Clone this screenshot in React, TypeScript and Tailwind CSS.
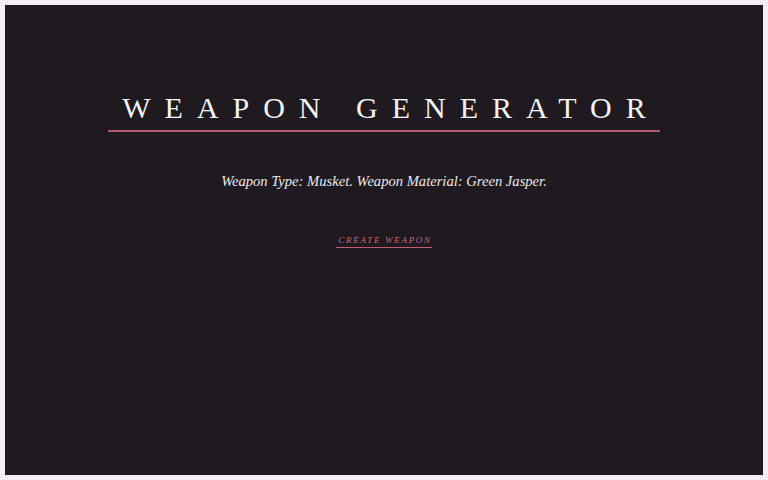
const serif = { fontFamily: '"Liberation Serif", "DejaVu Serif", serif' };

function WeaponCard({ type, material }: { type: string; material: string }) {
  return (
    <p className="mt-[39px] text-center text-[14.6px] italic text-[#ece8ec]">
      Weapon Type: {type}. Weapon Material: {material}.
    </p>
  );
}

export default function App() {
  return (
    <div className="h-screen w-full bg-[#f1eff2] p-[5px]" style={serif}>
      <main className="flex h-full w-full flex-col items-center bg-[#1e1a1f] pt-[83px]">
        <header className="flex flex-col items-center">
          <h1 className="px-[15px] pl-[29px] text-[30px] font-normal leading-[40px] tracking-[14px] text-[#f4f2f4]">
            WEAPON GENERATOR
          </h1>
          <div className="mt-[2px] h-[2px] w-[552px] bg-[#b65a6d]" />
        </header>

        <WeaponCard type="Musket" material="Green Jasper" />

        <button
          type="button"
          className="mt-[42px] border-b border-[#c45c76] pb-[1px] pl-[2px] text-[9px] italic leading-[11px] tracking-[1.7px] text-[#d0657f]"
        >
          CREATE WEAPON
        </button>
      </main>
    </div>
  );
}
